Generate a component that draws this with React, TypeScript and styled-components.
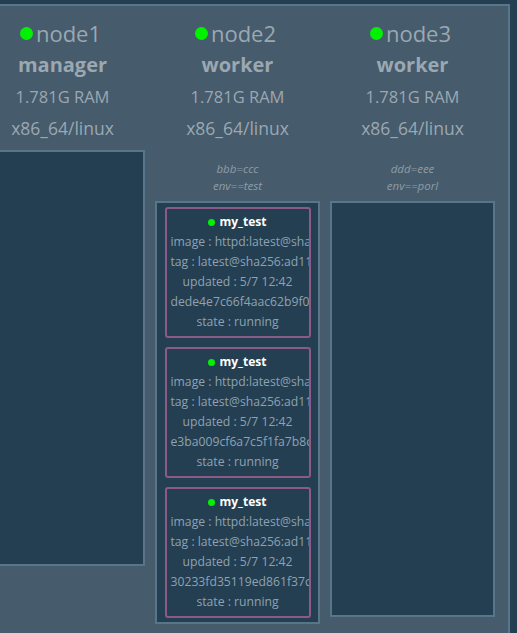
import React from "react";
import styled, { createGlobalStyle } from "styled-components";

const Global = createGlobalStyle`
  html, body { margin: 0; padding: 0; background: #243f52; overflow: hidden; }
  body { font-family: "Open Sans", "Liberation Sans", sans-serif; }
`;

const Viewport = styled.div`
  width: 100%;
  height: 633px;
  overflow: hidden;
`;

const Panel = styled.div`
  display: flex;
  width: max-content;
  margin: 4px 0 0 -35px;
  padding: 0 8px 12px;
  border: 2px solid #587589;
  background: #465b6b;
`;

const Column = styled.div`
  width: 175px;
  display: flex;
  flex-direction: column;
  align-items: center;
  text-align: center;
  color: #9ba8b2;
`;

const Name = styled.div`
  margin-top: 12px;
  padding-right: 4px;
  font-size: 22px;
  line-height: 31px;
  display: flex;
  align-items: center;
  gap: 3px;
`;

const Dot = styled.span<{ $size: number }>`
  display: inline-block;
  width: ${(p) => p.$size}px;
  height: ${(p) => p.$size}px;
  border-radius: 50%;
  background: #00f200;
  flex: none;
`;

const Role = styled.div`
  margin-top: 1px;
  font-size: 20px;
  font-weight: 700;
  line-height: 30px;
`;

const Spec = styled.div<{ $mt: number; $size: number }>`
  margin-top: ${(p) => p.$mt}px;
  font-size: ${(p) => p.$size}px;
  line-height: 30px;
`;

const Labels = styled.div`
  margin-top: 17px;
  font-size: 11.5px;
  font-style: italic;
  line-height: 17px;
  color: #8f9da8;
`;

const Box = styled.div<{ $mt: number }>`
  margin-top: ${(p) => p.$mt}px;
  width: 165px;
  min-height: 416px;
  box-sizing: border-box;
  border: 2px solid #587589;
  background: #243f52;
  display: flex;
  flex-direction: column;
  align-items: center;
  gap: 9px;
  padding: 4px 0;
`;

const Card = styled.div`
  width: 146px;
  box-sizing: border-box;
  border: 2px solid #8c5a86;
  border-radius: 3px;
  padding: 3px 4px 4px;
  overflow: hidden;
  white-space: nowrap;
  text-align: center;
  font-size: 12.2px;
  line-height: 20px;
  color: #8fa2b1;
`;

const Title = styled.div`
  display: flex;
  justify-content: center;
  align-items: center;
  gap: 4px;
  color: #ffffff;
  font-weight: 700;
  font-size: 12px;
`;

const Line = styled.div``;

type Task = { id: string };
type Node = {
  name: string;
  role: string;
  labels: string[];
  tasks: Task[];
};

const nodes: Node[] = [
  { name: "node1", role: "manager", labels: [], tasks: [] },
  {
    name: "node2",
    role: "worker",
    labels: ["bbb=ccc", "env==test"],
    tasks: [
      { id: "dede4e7c66f4aac62b9f0e81c2d" },
      { id: "e3ba009cf6a7c5f1fa7b8c3a21e" },
      { id: "30233fd35119ed861f37ca90b4d" },
    ],
  },
  { name: "node3", role: "worker", labels: ["ddd=eee", "env==porl"], tasks: [] },
];

export default function App() {
  return (
    <>
      <Global />
      <Viewport>
        <Panel>
          {nodes.map((n) => (
            <Column key={n.name}>
              <Name>
                <Dot $size={13} />
                {n.name}
              </Name>
              <Role>{n.role}</Role>
              <Spec $mt={2} $size={16.5}>1.781G RAM</Spec>
              <Spec $mt={1} $size={17.5}>x86_64/linux</Spec>
              {n.labels.length > 0 && (
                <Labels>
                  {n.labels.map((l) => (
                    <div key={l}>{l}</div>
                  ))}
                </Labels>
              )}
              <Box $mt={7}>
                {n.tasks.map((t) => (
                  <Card key={t.id}>
                    <Title>
                      <Dot $size={7} />
                      my_test
                    </Title>
                    <Line>image : httpd:latest@sha256:ad11e2bc</Line>
                    <Line>tag : latest@sha256:ad11e2bc4f</Line>
                    <Line>updated : 5/7 12:42</Line>
                    <Line>{t.id}</Line>
                    <Line>state : running</Line>
                  </Card>
                ))}
              </Box>
            </Column>
          ))}
        </Panel>
      </Viewport>
    </>
  );
}
